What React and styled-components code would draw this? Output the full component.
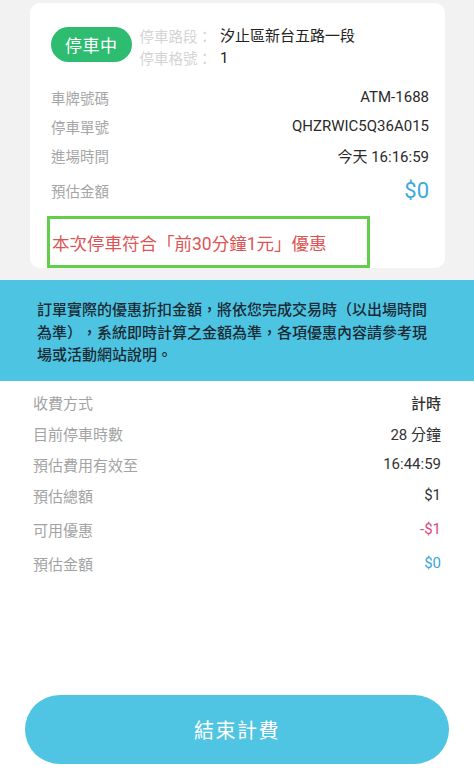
import React from 'react';
import styled, { createGlobalStyle } from 'styled-components';

const GlobalStyle = createGlobalStyle`
    body {
        margin: 0;
        background: #ffffff;
        font-family: Roboto, "Noto Sans CJK TC", "Noto Sans", sans-serif;
        -webkit-font-smoothing: antialiased;
        text-spacing-trim: space-all;
    }
`;

const cardRows = [
    { label: '車牌號碼', value: 'ATM-1688' },
    { label: '停車單號', value: 'QHZRWIC5Q36A015' },
    { label: '進場時間', value: '今天 16:16:59' },
];

const feeRows = [
    { label: '收費方式', value: '計時', bold: true },
    { label: '目前停車時數', value: '28 分鐘' },
    { label: '預估費用有效至', value: '16:44:59' },
    { label: '預估總額', value: '$1' },
    { label: '可用優惠', value: '-$1', tone: 'discount', spaced: true },
    { label: '預估金額', value: '$0', tone: 'total', spaced: true },
];

export default function App() {
    return (
        <Page>
            <GlobalStyle />
            <TopSection>
                <Card>
                    <Header>
                        <Badge>停車中</Badge>
                        <Info>
                            <InfoLabel>停車路段：</InfoLabel>
                            <InfoValue>汐止區新台五路一段</InfoValue>
                            <InfoLabel>停車格號：</InfoLabel>
                            <InfoValue>1</InfoValue>
                        </Info>
                    </Header>
                    <Details>
                        {cardRows.map((row) => (
                            <CardRow key={row.label}>
                                <CardLabel>{row.label}</CardLabel>
                                <CardValue>{row.value}</CardValue>
                            </CardRow>
                        ))}
                        <CardRow $big>
                            <CardLabel>預估金額</CardLabel>
                            <BigAmount>$0</BigAmount>
                        </CardRow>
                    </Details>
                    <Promo>本次停車符合「前30分鐘1元」優惠</Promo>
                </Card>
            </TopSection>

            <Notice>
                訂單實際的優惠折扣金額，將依您完成交易時（以出場時間為準），系統即時計算之金額為準，各項優惠內容請參考現場或活動網站說明。
            </Notice>

            <FeeList>
                {feeRows.map((row) => (
                    <FeeRow key={row.label} $spaced={row.spaced}>
                        <FeeLabel>{row.label}</FeeLabel>
                        <FeeValue $tone={row.tone} $bold={row.bold}>{row.value}</FeeValue>
                    </FeeRow>
                ))}
            </FeeList>

            <Footer>
                <EndButton type="button">結束計費</EndButton>
            </Footer>
        </Page>
    );
}

const Page = styled.div`
    width: 474px;
    min-height: 769px;
    background: #ffffff;
`;

const TopSection = styled.section`
    background: #f2f2f2;
    padding: 3px 29px 15px 30px;
`;

const Card = styled.div`
    background: #ffffff;
    border-radius: 10px;
    padding: 22px 16px 0 21px;
`;

const Header = styled.div`
    display: flex;
    align-items: flex-start;
    gap: 8px;
`;

const Badge = styled.div`
    margin-top: 2px;
    height: 35px;
    padding: 0 14px;
    border-radius: 18px;
    background: #2ebd70;
    color: #ffffff;
    font-family: "Noto Sans CJK TC", sans-serif;
    font-size: 17px;
    line-height: 35px;
    letter-spacing: 0.5px;
`;

const Info = styled.div`
    display: grid;
    grid-template-columns: auto 1fr;
    column-gap: 8px;
    line-height: 22px;
    font-family: "Noto Sans CJK TC", sans-serif;
`;

const InfoLabel = styled.span`
    font-size: 14.5px;
    color: #d4d4d4;
    white-space: nowrap;
`;

const InfoValue = styled.span`
    font-family: Roboto, "Noto Sans CJK TC", sans-serif;
    font-size: 15px;
    color: #222222;
`;

const Details = styled.div`
    margin-top: 13.5px;
`;

const CardRow = styled.div`
    display: flex;
    justify-content: space-between;
    align-items: center;
    height: ${(p) => (p.$big ? '41px' : '29px')};
`;

const CardLabel = styled.span`
    font-family: "Noto Sans CJK TC", sans-serif;
    font-size: 14.5px;
    color: #a6a6a6;
`;

const CardValue = styled.span`
    font-size: 15px;
    color: #2a2a2a;
`;

const BigAmount = styled.span`
    font-size: 22px;
    color: #3ea9df;
`;

const Promo = styled.div`
    margin: 5.5px 0 -3px -4px;
    width: 323px;
    height: 52px;
    box-sizing: border-box;
    border: 3px solid #62cf4a;
    padding: 13px 0 0 2px;
    font-family: Roboto, "Noto Sans CJK TC", sans-serif;
    font-size: 17.5px;
    line-height: 24px;
    color: #dc5555;
    white-space: nowrap;
`;

const Notice = styled.p`
    margin: 0;
    height: 101px;
    box-sizing: border-box;
    padding: 18px 37px 0 37px;
    background: #4ec4e3;
    color: #1b2a33;
    font-family: "Noto Sans CJK TC", sans-serif;
    font-weight: 500;
    font-size: 15px;
    line-height: 22.5px;
`;

const FeeList = styled.div`
    padding: 5.5px 33px 0 33px;
`;

const FeeRow = styled.div`
    display: flex;
    justify-content: space-between;
    align-items: center;
    height: 31px;
    margin-top: ${(p) => (p.$spaced ? '3px' : '0')};
`;

const FeeLabel = styled.span`
    font-family: "Noto Sans CJK TC", sans-serif;
    font-size: 15px;
    color: #a3a3a3;
`;

const toneColors = {
    discount: '#e2467a',
    total: '#3aa6dc',
};

const FeeValue = styled.span`
    font-size: 15px;
    font-weight: ${(p) => (p.$bold ? 500 : 400)};
    color: ${(p) => toneColors[p.$tone] || '#333333'};
`;

const Footer = styled.div`
    padding: 116.5px 25px 6px 25px;
`;

const EndButton = styled.button`
    display: block;
    width: 100%;
    height: 69px;
    border: none;
    border-radius: 35px;
    background: #4fc5e3;
    color: #ffffff;
    font-family: "Noto Sans CJK TC", sans-serif;
    font-size: 20px;
    letter-spacing: 1.5px;
    cursor: pointer;
`;
